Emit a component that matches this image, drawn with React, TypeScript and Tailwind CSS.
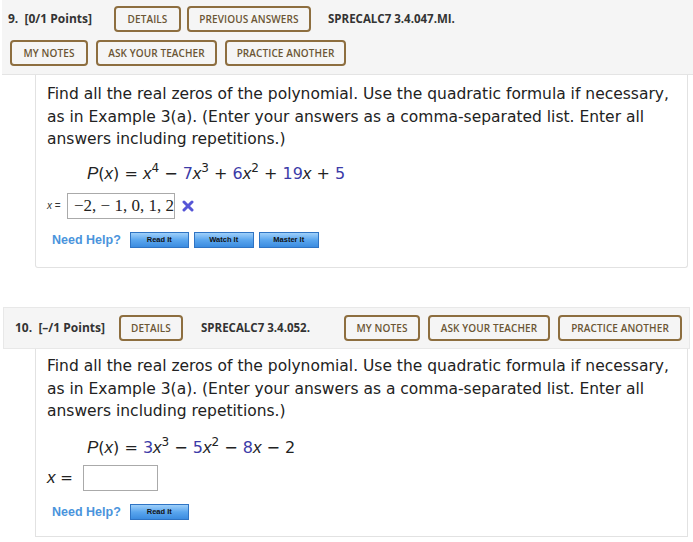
import React from "react";

const Btn = ({ children, className = "" }: { children: React.ReactNode; className?: string }) => (
  <div
    className={`h-[26px] flex items-center justify-center border-2 border-[#8d6e3f] rounded-[4px] text-[10px] font-semibold text-[#6b5634] tracking-[0.1px] whitespace-nowrap ${className}`}
    style={{ fontFamily: '"Open Sans", sans-serif' }}
  >
    {children}
  </div>
);

const HelpBtn = ({ children, w = "w-[59px]" }: { children: React.ReactNode; w?: string }) => (
  <div
    className={`${w} h-[16px] flex items-center justify-center border border-[#2f74c4] bg-gradient-to-b from-[#9fd0fa] via-[#5aa6ee] to-[#3b8ce0] text-[7.5px] font-bold text-[#111]`}
    style={{ fontFamily: '"Liberation Sans", Arial, sans-serif' }}
  >
    {children}
  </div>
);

const Blue = ({ children }: { children: React.ReactNode }) => <span className="text-[#3b3ba8]">{children}</span>;
const Sup = ({ children }: { children: React.ReactNode }) => (
  <sup className="text-[12px] relative top-[-7px] align-baseline">{children}</sup>
);
const I = ({ children }: { children: React.ReactNode }) => (
  <span className="italic text-[17px]" style={{ fontFamily: '"Liberation Sans", Arial, sans-serif' }}>
    {children}
  </span>
);

const verdana = { fontFamily: '"DejaVu Sans", Verdana, sans-serif' };

export default function App() {
  return (
    <div className="w-[693px] h-[542px] bg-white overflow-hidden" style={{ fontFamily: '"Open Sans", sans-serif' }}>
      {/* Question 9 header */}
      <div className="ml-[2px] h-[75px] bg-[#f5f5f5] border-b border-[#e4e4e4] pl-[6px] pt-[6px]">
        <div className="flex items-center h-[26px]">
          <div className="text-[12px] font-bold text-[#333] w-[106px]">9.&nbsp; [0/1 Points]</div>
          <Btn className="w-[67px]">DETAILS</Btn>
          <Btn className="w-[124px] ml-[6px]">PREVIOUS ANSWERS</Btn>
          <div className="ml-[17px] text-[11.5px] font-bold text-[#333]">SPRECALC7 3.4.047.MI.</div>
        </div>
        <div className="flex items-center h-[26px] mt-[8px] ml-[2px]">
          <Btn className="w-[78px]">MY NOTES</Btn>
          <Btn className="w-[121px] ml-[8px]">ASK YOUR TEACHER</Btn>
          <Btn className="w-[121px] ml-[8px]">PRACTICE ANOTHER</Btn>
        </div>
      </div>
      {/* Question 9 body */}
      <div className="ml-[35px] mr-[5px] h-[193px] border border-t-0 border-[#e2e2e2] rounded-b-[3px] pl-[11px] pt-[8px]">
        <div className="text-[15.5px] leading-[22.5px] text-[#222] whitespace-nowrap" style={verdana}>
          Find all the real zeros of the polynomial. Use the quadratic formula if necessary,
          <br />
          as in Example 3(a). (Enter your answers as a comma-separated list. Enter all
          <br />
          answers including repetitions.)
        </div>
        <div className="ml-[40px] mt-[10px] text-[16px] text-[#222] whitespace-nowrap h-[24px]" style={verdana}>
          <I>P</I>(<I>x</I>) = <I>x</I>
          <Sup>4</Sup> − <Blue>7</Blue>
          <I>x</I>
          <Sup>3</Sup> + <Blue>6</Blue>
          <I>x</I>
          <Sup>2</Sup> + <Blue>19</Blue>
          <I>x</I> + <Blue>5</Blue>
        </div>
        <div className="flex items-center mt-[8px]">
          <span
            className="text-[10px] text-[#333] w-[20px] whitespace-nowrap"
            style={{ fontFamily: '"Liberation Sans", Arial, sans-serif' }}
          >
            <span className="italic">x</span> =
          </span>
          <div
            className="w-[108px] h-[26px] border border-[#aaa] bg-white flex items-center pl-[6px] text-[17px] text-[#222]"
            style={{ fontFamily: '"Liberation Serif", "Times New Roman", serif' }}
          >
            −2, − 1, 0, 1, 2
          </div>
          <svg width="12" height="12" viewBox="0 0 12 12" className="ml-[7px]">
            <path d="M2 2 L10 10 M10 2 L2 10" stroke="#5656d6" strokeWidth="3" strokeLinecap="round" />
          </svg>
        </div>
        <div className="flex items-center mt-[12px] ml-[5px]">
          <span
            className="text-[12.5px] font-bold text-[#4a94dc] mr-[9px]"
            style={{ fontFamily: '"Liberation Sans", Arial, sans-serif' }}
          >
            Need Help?
          </span>
          <HelpBtn>Read It</HelpBtn>
          <div className="w-[5px]" />
          <HelpBtn w="w-[60px]">Watch It</HelpBtn>
          <div className="w-[5px]" />
          <HelpBtn w="w-[60px]">Master It</HelpBtn>
        </div>
      </div>

      {/* Question 10 header */}
      <div className="ml-[3px] mr-[3px] mt-[39px] h-[42px] bg-[#f5f5f5] border border-[#e8e8e8] pl-[11px] flex items-center">
        <div className="text-[12px] font-bold text-[#333] w-[104px]">10.&nbsp; [–/1 Points]</div>
        <Btn className="w-[64px]">DETAILS</Btn>
        <div className="ml-[18px] text-[11.5px] font-bold text-[#333] w-[143px]">SPRECALC7 3.4.052.</div>
        <Btn className="w-[76px]">MY NOTES</Btn>
        <Btn className="w-[122px] ml-[8px]">ASK YOUR TEACHER</Btn>
        <Btn className="w-[124px] ml-[8px]">PRACTICE ANOTHER</Btn>
      </div>
      {/* Question 10 body */}
      <div className="ml-[35px] mr-[5px] h-[188px] border border-t-0 border-[#e2e2e2] pl-[11px] pt-[6px]">
        <div className="text-[15.5px] leading-[22.5px] text-[#222] whitespace-nowrap" style={verdana}>
          Find all the real zeros of the polynomial. Use the quadratic formula if necessary,
          <br />
          as in Example 3(a). (Enter your answers as a comma-separated list. Enter all
          <br />
          answers including repetitions.)
        </div>
        <div className="ml-[40px] mt-[12px] text-[16px] text-[#222] whitespace-nowrap h-[24px]" style={verdana}>
          <I>P</I>(<I>x</I>) = <Blue>3</Blue>
          <I>x</I>
          <Sup>3</Sup> − <Blue>5</Blue>
          <I>x</I>
          <Sup>2</Sup> − <Blue>8</Blue>
          <I>x</I> − 2
        </div>
        <div className="flex items-center mt-[6px]">
          <span className="text-[15px] text-[#222] mr-[10px]" style={verdana}>
            <I>x</I> =
          </span>
          <div className="w-[75px] h-[26px] border border-[#aaa] bg-white" />
        </div>
        <div className="flex items-center mt-[12px] ml-[5px]">
          <span
            className="text-[12.5px] font-bold text-[#4a94dc] mr-[9px]"
            style={{ fontFamily: '"Liberation Sans", Arial, sans-serif' }}
          >
            Need Help?
          </span>
          <HelpBtn>Read It</HelpBtn>
        </div>
      </div>
    </div>
  );
}
